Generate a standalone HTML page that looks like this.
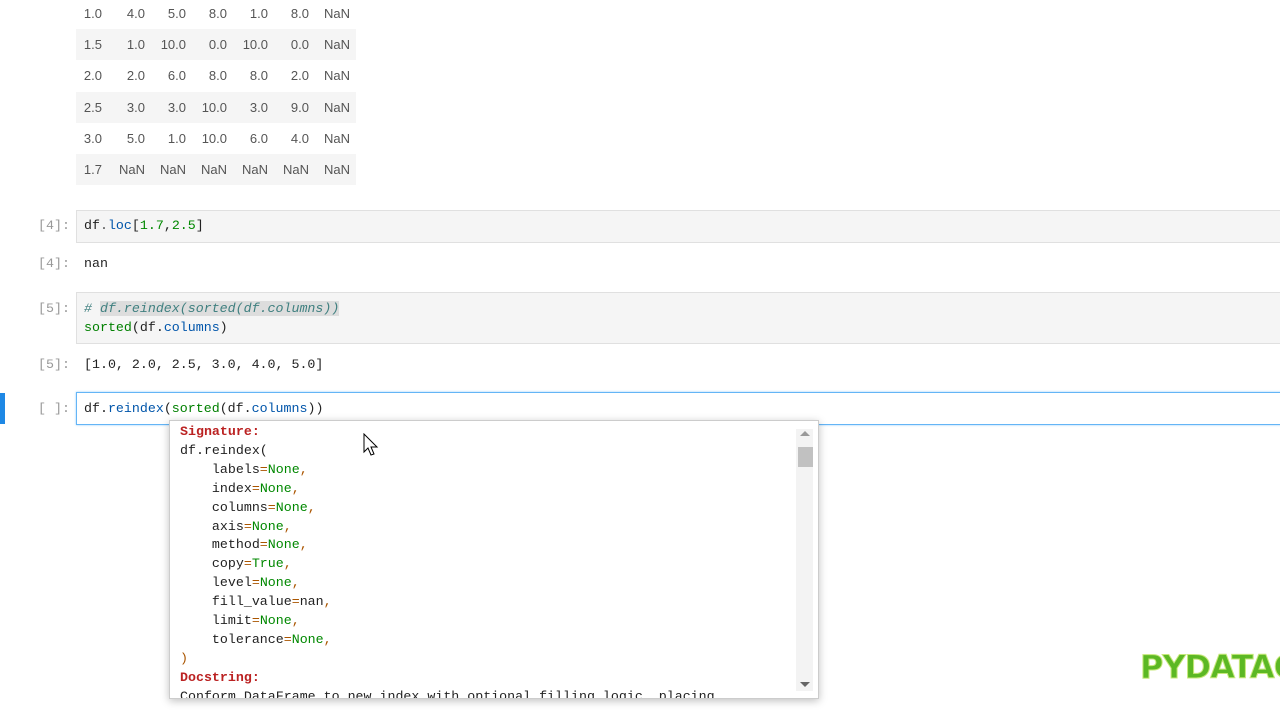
<!DOCTYPE html>
<html><head><style>
body{margin:0;width:1280px;height:720px;overflow:hidden;background:#fff;position:relative;font-family:"Liberation Sans",sans-serif}
.a{position:absolute}
.m{font-family:"Liberation Mono",monospace;font-size:13.3px;white-space:pre;line-height:19px;color:#222}
.p{color:#999;font-family:"Liberation Mono",monospace;font-size:13.3px;white-space:pre}
.in{position:absolute;left:76px;right:-2px;background:#f5f5f5;border:1px solid #e0e0e0}
table{border-collapse:collapse;font-size:13px;color:#555;table-layout:fixed;width:280px}
td{height:31.2px;width:41px;text-align:right;padding:0 6px 0 0;box-sizing:border-box;overflow:visible;white-space:nowrap}
td:first-child{width:34px;padding-right:8px}
tr:nth-child(even){background:#f5f5f5}
.g{color:#008000}.n{color:#080}.num{color:#080}.b{color:#05a}
.s{color:#b22;font-weight:bold}.y{color:#a50}
</style></head><body>
<table class="a" style="left:76px;top:-2px">
<tr><td>1.0</td><td>4.0</td><td>5.0</td><td>8.0</td><td>1.0</td><td>8.0</td><td>NaN</td></tr>
<tr><td>1.5</td><td>1.0</td><td>10.0</td><td>0.0</td><td>10.0</td><td>0.0</td><td>NaN</td></tr>
<tr><td>2.0</td><td>2.0</td><td>6.0</td><td>8.0</td><td>8.0</td><td>2.0</td><td>NaN</td></tr>
<tr><td>2.5</td><td>3.0</td><td>3.0</td><td>10.0</td><td>3.0</td><td>9.0</td><td>NaN</td></tr>
<tr><td>3.0</td><td>5.0</td><td>1.0</td><td>10.0</td><td>6.0</td><td>4.0</td><td>NaN</td></tr>
<tr><td>1.7</td><td>NaN</td><td>NaN</td><td>NaN</td><td>NaN</td><td>NaN</td><td>NaN</td></tr>
</table>

<div class="p a" style="left:38px;top:218px">[4]:</div>
<div class="in" style="top:210px;height:31px"></div>
<div class="m a" style="left:84px;top:216px">df<span style="color:#555">.</span><span class="b">loc</span>[<span class="num">1.7</span>,<span class="num">2.5</span>]</div>
<div class="p a" style="left:38px;top:256px">[4]:</div>
<div class="m a" style="left:84px;top:254px">nan</div>

<div class="p a" style="left:38px;top:301px">[5]:</div>
<div class="in" style="top:292px;height:50px"></div>
<div class="m a" style="left:84px;top:299px;color:#408080;font-style:italic"># <span style="background:#ddd">df.reindex(sorted(df.columns))</span></div>
<div class="m a" style="left:84px;top:318px"><span class="g">sorted</span>(df.<span class="b">columns</span>)</div>
<div class="p a" style="left:38px;top:357px">[5]:</div>
<div class="m a" style="left:84px;top:355px">[1.0, 2.0, 2.5, 3.0, 4.0, 5.0]</div>

<div class="a" style="left:0;top:393px;width:5px;height:31px;background:#1e88e5"></div>
<div class="p a" style="left:38px;top:401px">[ ]:</div>
<div class="a" style="left:76px;right:-2px;top:392px;height:31px;border:1px solid #64b5f6;background:#fff;box-shadow:0 0 2px #90caf9"></div>
<div class="m a" style="left:84px;top:399px">df.<span class="b">reindex</span>(<span class="g">sorted</span>(df.<span class="b">columns</span>))</div>

<div class="a" style="left:169px;top:420px;width:648px;height:277px;background:#fff;border:1px solid #ccc;box-shadow:0 2px 8px rgba(0,0,0,.25);overflow:hidden">
<div class="m a" style="left:10px;top:2px;line-height:18.9px"><span class="s">Signature:</span>
df.reindex(
    labels<span class="y">=</span><span class="n">None</span><span class="y">,</span>
    index<span class="y">=</span><span class="n">None</span><span class="y">,</span>
    columns<span class="y">=</span><span class="n">None</span><span class="y">,</span>
    axis<span class="y">=</span><span class="n">None</span><span class="y">,</span>
    method<span class="y">=</span><span class="n">None</span><span class="y">,</span>
    copy<span class="y">=</span><span class="n">True</span><span class="y">,</span>
    level<span class="y">=</span><span class="n">None</span><span class="y">,</span>
    fill_value<span class="y">=</span>nan<span class="y">,</span>
    limit<span class="y">=</span><span class="n">None</span><span class="y">,</span>
    tolerance<span class="y">=</span><span class="n">None</span><span class="y">,</span>
<span class="y">)</span>
<span class="s">Docstring:</span>
Conform DataFrame to new index with optional filling logic, placing</div>
<div class="a" style="left:626px;top:8px;width:17px;height:262px;background:#f3f3f3"></div>
<div class="a" style="left:628px;top:26px;width:15px;height:20px;background:#c1c1c1"></div>
<div class="a" style="left:630px;top:10px;width:0;height:0;border:5px solid transparent;border-bottom:5px solid #999;border-top:0"></div>
<div class="a" style="left:630px;top:261px;width:0;height:0;border:5px solid transparent;border-top:5px solid #666;border-bottom:0"></div>
</div>

<svg class="a" style="left:363px;top:433px" width="16" height="24"><path d="M1 1 L1 19 L5 15 L8 22 L11 21 L8 14 L14 14 Z" fill="#fff" stroke="#000" stroke-width="1"/></svg>

<div class="a" style="left:1138px;top:640px;width:142px;height:60px;overflow:hidden">
<div class="a" style="left:2px;top:8px;font-family:'DejaVu Sans',sans-serif;font-weight:bold;font-size:32px;color:#5cb824;letter-spacing:-1px;-webkit-text-stroke:1px #c6e87a;white-space:nowrap">PYDATACODE</div>
</div>
</body></html>
